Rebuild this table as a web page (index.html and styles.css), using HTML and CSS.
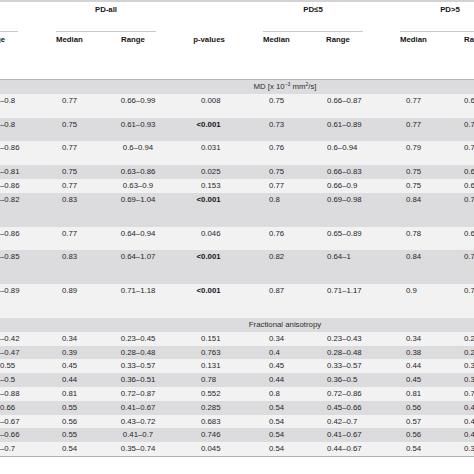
FILE: index.html
```html
<!DOCTYPE html>
<html>
<head>
<meta charset="utf-8">
<link rel="stylesheet" href="styles.css">
</head>
<body>
<table class="tbl">
  <colgroup>
    <col class="c0"><col class="c1"><col class="c2"><col class="c3"><col class="c4"><col class="c5"><col class="c6"><col class="c7">
  </colgroup>
  <thead>
    <tr class="grp-row">
      <th><div class="tail-rule"></div></th>
      <th colspan="2"><div class="grp">PD-all</div></th>
      <th></th>
      <th colspan="2"><div class="grp">PD≤5</div></th>
      <th colspan="2"><div class="grp">PD&gt;5</div></th>
    </tr>
    <tr class="sub-row">
      <th class="tail">ge</th>
      <th>Median</th>
      <th>Range</th>
      <th class="pv">p-values</th>
      <th>Median</th>
      <th>Range</th>
      <th>Median</th>
      <th>Range</th>
    </tr>
  </thead>
  <tbody>
    <tr class="sec"><td colspan="8">MD [x 10<sup>−3</sup> mm<sup>2</sup>/s]</td></tr>
    <tr class="data l2"><td>–0.8</td><td>0.77</td><td>0.66–0.99</td><td>0.008</td><td>0.75</td><td>0.66–0.87</td><td>0.77</td><td>0.6</td></tr>
    <tr class="data l2"><td>–0.8</td><td>0.75</td><td>0.61–0.93</td><td><b class="sig">&lt;0.001</b></td><td>0.73</td><td>0.61–0.89</td><td>0.77</td><td>0.7</td></tr>
    <tr class="data l2"><td>–0.86</td><td>0.77</td><td>0.6–0.94</td><td>0.031</td><td>0.76</td><td>0.6–0.94</td><td>0.79</td><td>0.7</td></tr>
    <tr class="data"><td>–0.81</td><td>0.75</td><td>0.63–0.86</td><td>0.025</td><td>0.75</td><td>0.66–0.83</td><td>0.75</td><td>0.6</td></tr>
    <tr class="data"><td>–0.86</td><td>0.77</td><td>0.63–0.9</td><td>0.153</td><td>0.77</td><td>0.66–0.9</td><td>0.75</td><td>0.6</td></tr>
    <tr class="data l3"><td>–0.82</td><td>0.83</td><td>0.69–1.04</td><td><b class="sig">&lt;0.001</b></td><td>0.8</td><td>0.69–0.98</td><td>0.84</td><td>0.7</td></tr>
    <tr class="data l2"><td>–0.86</td><td>0.77</td><td>0.64–0.94</td><td>0.046</td><td>0.76</td><td>0.65–0.89</td><td>0.78</td><td>0.6</td></tr>
    <tr class="data l3"><td>–0.85</td><td>0.83</td><td>0.64–1.07</td><td><b class="sig">&lt;0.001</b></td><td>0.82</td><td>0.64–1</td><td>0.84</td><td>0.7</td></tr>
    <tr class="data l3"><td>–0.89</td><td>0.89</td><td>0.71–1.18</td><td><b class="sig">&lt;0.001</b></td><td>0.87</td><td>0.71–1.17</td><td>0.9</td><td>0.7</td></tr>
    <tr class="sec"><td colspan="8">Fractional anisotropy</td></tr>
    <tr class="data"><td>–0.42</td><td>0.34</td><td>0.23–0.45</td><td>0.151</td><td>0.34</td><td>0.23–0.43</td><td>0.34</td><td>0.2</td></tr>
    <tr class="data"><td>–0.47</td><td>0.39</td><td>0.28–0.48</td><td>0.763</td><td>0.4</td><td>0.28–0.48</td><td>0.38</td><td>0.2</td></tr>
    <tr class="data"><td>0.55</td><td>0.45</td><td>0.33–0.57</td><td>0.131</td><td>0.45</td><td>0.33–0.57</td><td>0.44</td><td>0.3</td></tr>
    <tr class="data"><td>–0.5</td><td>0.44</td><td>0.36–0.51</td><td>0.78</td><td>0.44</td><td>0.36–0.5</td><td>0.45</td><td>0.3</td></tr>
    <tr class="data"><td>–0.88</td><td>0.81</td><td>0.72–0.87</td><td>0.552</td><td>0.8</td><td>0.72–0.86</td><td>0.81</td><td>0.7</td></tr>
    <tr class="data"><td>0.66</td><td>0.55</td><td>0.41–0.67</td><td>0.285</td><td>0.54</td><td>0.45–0.66</td><td>0.56</td><td>0.4</td></tr>
    <tr class="data"><td>–0.67</td><td>0.56</td><td>0.43–0.72</td><td>0.683</td><td>0.54</td><td>0.42–0.7</td><td>0.57</td><td>0.4</td></tr>
    <tr class="data"><td>–0.66</td><td>0.55</td><td>0.41–0.7</td><td>0.746</td><td>0.54</td><td>0.41–0.67</td><td>0.56</td><td>0.4</td></tr>
    <tr class="data"><td>–0.7</td><td>0.54</td><td>0.35–0.74</td><td>0.045</td><td>0.54</td><td>0.44–0.67</td><td>0.54</td><td>0.3</td></tr>
  </tbody>
</table>
</body>
</html>
```

FILE: styles.css
```css
html, body {
  margin: 0;
  padding: 0;
  background: #ffffff;
  overflow: hidden;
  width: 474px;
  height: 474px;
}

body {
  font-family: "Liberation Sans", Arial, Helvetica, sans-serif;
  font-size: 7.8px;
  color: #262626;
}

.tbl {
  border-collapse: separate;
  border-spacing: 0;
  table-layout: fixed;
  width: 520px;
  border-top: 2px solid #d2d2d4;
  border-bottom: 1px solid #b0b0b2;
}

.c0 { width: 50px; }
.c1 { width: 65px; }
.c2 { width: 46px; }
.c3 { width: 96px; }
.c4 { width: 63px; }
.c5 { width: 74px; }
.c6 { width: 64px; }
.c7 { width: 62px; }

th {
  font-weight: bold;
  color: #151515;
  text-align: left;
  vertical-align: top;
  line-height: 10px;
  white-space: nowrap;
  overflow: hidden;
}

.grp-row th {
  padding: 3px 0 0 0;
}

.grp {
  width: 100px;
  margin-left: 6px;
  text-align: center;
  padding-bottom: 16px;
  border-bottom: 1px solid #c9c9cb;
}

.tail-rule {
  width: 18px;
  height: 26px;
  border-bottom: 1px solid #c9c9cb;
}

.sub-row th {
  padding: 3px 0 34px 6px;
  border-bottom: 1px solid #b4b4b6;
}

.sub-row th.tail {
  padding-left: 0;
  text-indent: -4px;
}

.sub-row th.pv {
  padding-left: 0;
  text-align: center;
}

td {
  padding: 2px 0;
  line-height: 9.8px;
  vertical-align: top;
  white-space: nowrap;
  overflow: hidden;
}

tbody tr:nth-child(odd) td { background: #dcdcdf; }
tbody tr:nth-child(even) td { background: #f2f2f3; }

tr.l2 { height: 23.8px; }
tr.l3 { height: 33.8px; }

.sec td {
  padding-left: 50px;
  text-align: center;
  color: #2c2c2c;
}

sup {
  font-size: 5px;
  line-height: 0;
  vertical-align: 3px;
}

.data td:nth-child(1) { padding-left: 0; }
.data td:nth-child(2) { padding-left: 12px; }
.data td:nth-child(3) { text-align: center; }
.data td:nth-child(4) { padding-left: 40px; }
.data td:nth-child(5) { padding-left: 12px; }
.data td:nth-child(6) { padding-left: 7px; }
.data td:nth-child(7) { padding-left: 12px; }
.data td:nth-child(8) { padding-left: 6px; }

.sig {
  font-weight: bold;
  color: #151515;
  margin-left: -4.5px;
}
```
